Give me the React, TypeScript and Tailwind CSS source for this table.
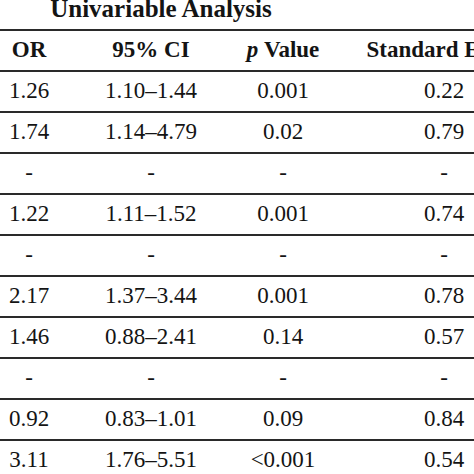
import React from 'react';

const rows: string[][] = [
  ['1.26', '1.10–1.44', '0.001', '0.22'],
  ['1.74', '1.14–4.79', '0.02', '0.79'],
  ['-', '-', '-', '-'],
  ['1.22', '1.11–1.52', '0.001', '0.74'],
  ['-', '-', '-', '-'],
  ['2.17', '1.37–3.44', '0.001', '0.78'],
  ['1.46', '0.88–2.41', '0.14', '0.57'],
  ['-', '-', '-', '-'],
  ['0.92', '0.83–1.01', '0.09', '0.84'],
  ['3.11', '1.76–5.51', '<0.001', '0.54'],
];

const Cell: React.FC<{ children: React.ReactNode }> = ({ children }) => (
  <div className="flex items-center justify-center whitespace-nowrap">{children}</div>
);

export default function App() {
  return (
    <div
      className="w-[474px] h-[474px] overflow-hidden bg-white text-[#141414]"
      style={{ fontFamily: '"Liberation Serif", "Times New Roman", serif' }}
    >
      <div className="w-[566px]">
        <div className="h-[29px] w-[322px] flex justify-center">
          <span className="text-[25px] font-bold leading-none mt-[-4px] whitespace-nowrap">
            Univariable Analysis
          </span>
        </div>

        <div className="grid grid-cols-[58px_186px_78px_244px] h-[41px] border-t-2 border-[#2a2a2a] text-[23px] font-bold">
          <Cell>OR</Cell>
          <Cell>95% CI</Cell>
          <Cell>
            <span className="italic">p</span>&nbsp;Value
          </Cell>
          <Cell>Standard Error</Cell>
        </div>

        {rows.map((r, i) => (
          <div
            key={i}
            className="grid grid-cols-[58px_186px_78px_244px] h-[41px] border-t-2 border-[#2a2a2a] text-[23px]"
          >
            {r.map((v, j) => (
              <Cell key={j}>{v}</Cell>
            ))}
          </div>
        ))}
      </div>
    </div>
  );
}
